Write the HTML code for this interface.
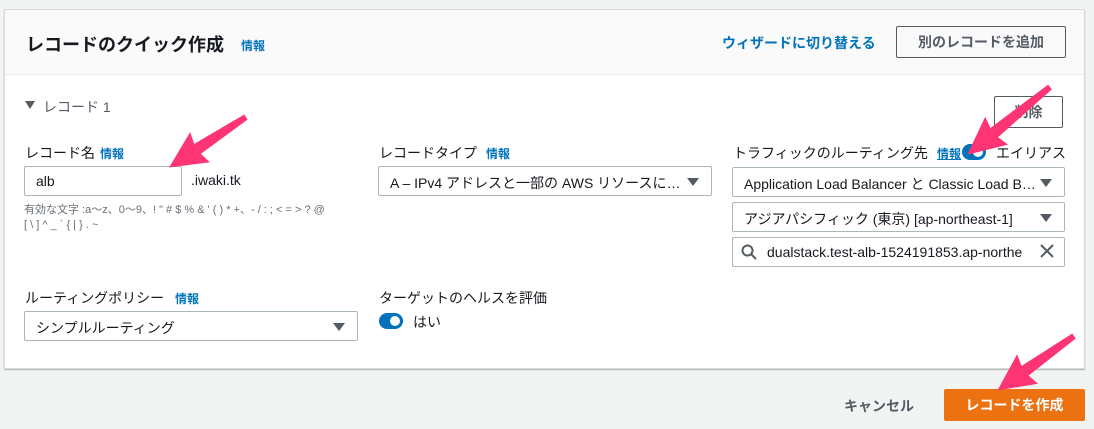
<!DOCTYPE html><html><head><meta charset="utf-8"><style>
*{box-sizing:border-box;margin:0;padding:0}
body{width:1094px;height:429px;background:#f2f3f3;font-family:"Liberation Sans","Noto Sans CJK JP",sans-serif;color:#16191f;position:relative;overflow:hidden;font-size:14px}
.a{position:absolute;white-space:nowrap}
.card{position:absolute;left:4px;top:9px;width:1081px;height:360px;background:#fff;border:1px solid #d5dbdb;box-shadow:0 1px 1px rgba(0,28,36,.3)}
.hd{position:absolute;left:0;top:0;width:100%;height:65px;background:#fafafa;border-bottom:1px solid #eaeded}
.info{color:#0073bb;font-weight:bold;font-size:12px}
.inp{position:absolute;border:1px solid #aab7b8;border-radius:2px;height:30px;background:#fff;font-size:14px;padding:6px 11px;white-space:nowrap;overflow:hidden}
.tri{position:absolute;right:12px;top:11px;width:0;height:0;border-left:6px solid transparent;border-right:6px solid transparent;border-top:8px solid #545b64}
.lbl{font-size:14px;color:#16191f}
.tog{position:absolute;width:24px;height:16px;border-radius:8px;background:#0073bb}
.tog:after{content:"";position:absolute;right:3px;top:3px;width:10px;height:10px;border-radius:50%;background:#fff}
</style></head><body>
<div class="card">
<div class="hd">
<div class="a" style="left:21px;top:21px;font-size:18px;font-weight:bold">レコードのクイック作成</div>
<div class="a info" style="left:236px;top:27px">情報</div>
<div class="a" style="left:717px;top:23px;color:#0073bb;font-weight:bold;font-size:14px">ウィザードに切り替える</div>
<div class="a" style="left:891px;top:16px;width:170px;height:32px;border:1px solid #545b64;border-radius:2px;text-align:center;line-height:30px;font-weight:bold;color:#545b64">別のレコードを追加</div>
</div>
</div>
<div class="a" style="left:25px;top:101px;width:0;height:0;border-left:5px solid transparent;border-right:5px solid transparent;border-top:8px solid #545b64"></div>
<div class="a" style="left:43px;top:97px;color:#545b64;font-size:14px">レコード 1</div>
<div class="a" style="left:994px;top:96px;width:69px;height:32px;border:1px solid #545b64;border-radius:2px;text-align:center;line-height:30px;font-weight:bold;color:#545b64">削除</div>

<div class="a lbl" style="left:25px;top:143px">レコード名</div><div class="a info" style="left:100px;top:145px">情報</div>
<div class="inp" style="left:24px;top:166px;width:158px">alb</div>
<div class="a" style="left:191px;top:172px">.iwaki.tk</div>
<div class="a" style="left:24px;top:203px;font-size:11px;color:#687078;line-height:15px">有効な文字 :a〜z、0〜9、! " # $ % &amp; ' ( ) * +、- / : ; &lt; = &gt; ? @<br>[ \ ] ^ _ ` { | } . ~</div>

<div class="a lbl" style="left:379px;top:143px">レコードタイプ</div><div class="a info" style="left:486px;top:145px">情報</div>
<div class="inp" style="left:378px;top:166px;width:334px">A – IPv4 アドレスと一部の AWS リソースに…<span class="tri"></span></div>

<div class="a lbl" style="left:733px;top:143px">トラフィックのルーティング先</div><div class="a info" style="left:937px;top:145px;text-decoration:underline">情報</div>
<div class="tog" style="left:962px;top:144px"></div>
<div class="a lbl" style="left:996px;top:143px">エイリアス</div>
<div class="inp" style="left:732px;top:167px;width:333px">Application Load Balancer と Classic Load B…<span class="tri"></span></div>
<div class="inp" style="left:732px;top:202px;width:333px">アジアパシフィック (東京) [ap-northeast-1]<span class="tri"></span></div>
<div class="inp" style="left:732px;top:237px;width:333px;padding-left:34px">dualstack.test-alb-1524191853.ap-northe</div>
<svg class="a" style="left:741px;top:244px" width="16" height="16" viewBox="0 0 16 16"><circle cx="6.5" cy="6.5" r="5" fill="none" stroke="#545b64" stroke-width="2"/><path d="M10 10l5 5" stroke="#545b64" stroke-width="2"/></svg>
<svg class="a" style="left:1040px;top:244px" width="14" height="14" viewBox="0 0 14 14"><path d="M1 1l12 12M13 1L1 13" stroke="#545b64" stroke-width="2"/></svg>

<div class="a lbl" style="left:25px;top:288px">ルーティングポリシー</div><div class="a info" style="left:175px;top:290px">情報</div>
<div class="inp" style="left:24px;top:311px;width:334px">シンプルルーティング<span class="tri"></span></div>
<div class="a lbl" style="left:379px;top:288px">ターゲットのヘルスを評価</div>
<div class="tog" style="left:379px;top:313px"></div>
<div class="a lbl" style="left:413px;top:312px">はい</div>

<div class="a" style="left:844px;top:396px;font-weight:bold;color:#545b64">キャンセル</div>
<div class="a" style="left:944px;top:389px;width:141px;height:32px;background:#ec7211;color:#fff;font-weight:bold;text-align:center;line-height:32px;border-radius:2px">レコードを作成</div>

<svg class="a" style="left:0;top:0" width="1094" height="429" viewBox="0 0 1094 429">
<g fill="#fe3475">
<path transform="translate(246,117) rotate(146.7)" d="M0,-3 L58,-6 L55,-18 L92,0 L55,18 L58,6 L0,3 Z"/>
<path transform="translate(1050,87) rotate(140.7)" d="M0,-3 L72,-6 L69,-18 L107,0 L69,18 L72,6 L0,3 Z"/>
<path transform="translate(1074,336) rotate(144.6)" d="M0,-3 L60,-6 L57,-18 L94,0 L57,18 L60,6 L0,3 Z"/>
</g></svg>
</body></html>
